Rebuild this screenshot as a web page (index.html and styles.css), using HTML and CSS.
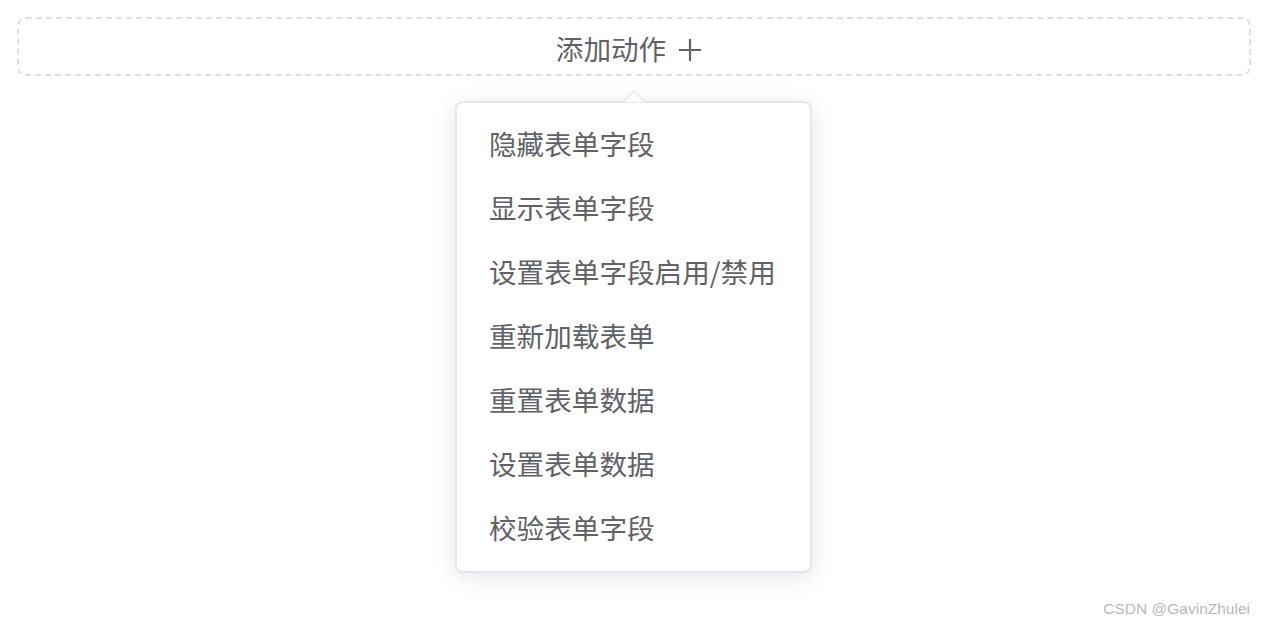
FILE: index.html
```html
<!DOCTYPE html>
<html lang="zh">
<head>
<meta charset="utf-8">
<link rel="stylesheet" href="styles.css">
</head>
<body>
<div class="page">
  <div class="add-action">
    <span class="label">添加动作</span>
    <svg class="plus" width="24" height="24" viewBox="0 0 24 24"><path d="M12 1v22M1 12h22" stroke="#606266" stroke-width="2.2" fill="none"/></svg>
  </div>
  <div class="dropdown">
    <div class="arrow"></div>
    <ul class="menu">
      <li>隐藏表单字段</li>
      <li>显示表单字段</li>
      <li>设置表单字段启用/禁用</li>
      <li>重新加载表单</li>
      <li>重置表单数据</li>
      <li>设置表单数据</li>
      <li>校验表单字段</li>
    </ul>
  </div>
  <div class="watermark">CSDN @GavinZhulei</div>
</div>
</body>
</html>
```
FILE: styles.css
```css
html, body {
  margin: 0;
  padding: 0;
  background: #fff;
}
.page {
  position: relative;
  width: 1264px;
  height: 626px;
  padding: 17px 13px 0 17px;
  box-sizing: border-box;
  font-family: "Noto Sans CJK SC", "Noto Sans", sans-serif;
  color: #606266;
}
.add-action {
  height: 59px;
  box-sizing: border-box;
  border: 2px dashed #dcdfe6;
  border-radius: 9px;
  display: flex;
  align-items: center;
  justify-content: center;
  gap: 12px;
  font-size: 27.6px;
  padding: 6px 10px 0 0;
}
.add-action .label {
  line-height: 1;
  position: relative;
  top: -1px;
}
.plus {
  display: block;
}
.dropdown {
  position: absolute;
  left: 455px;
  top: 101px;
  width: 357px;
  height: 472px;
  box-sizing: border-box;
  background: #fff;
  border: 2px solid #e4e7ed;
  border-radius: 8px;
  box-shadow: 0 4px 24px rgba(0, 0, 0, 0.10);
}
.arrow {
  position: absolute;
  left: 165px;
  top: -13px;
  width: 0;
  height: 0;
  border-left: 12px solid transparent;
  border-right: 12px solid transparent;
  border-bottom: 12px solid #e4e7ed;
}
.arrow::after {
  content: "";
  position: absolute;
  left: -10px;
  top: 2px;
  border-left: 10px solid transparent;
  border-right: 10px solid transparent;
  border-bottom: 10px solid #fff;
}
.menu {
  list-style: none;
  margin: 0;
  padding: 8px 0;
}
.menu li {
  height: 64px;
  line-height: 64px;
  padding-left: 32px;
  font-size: 27.6px;
  white-space: nowrap;
}
.watermark {
  position: absolute;
  right: 14px;
  bottom: 8px;
  font-family: "Liberation Sans", Arial, sans-serif;
  font-size: 15.5px;
  color: #b8b8b8;
}
```
